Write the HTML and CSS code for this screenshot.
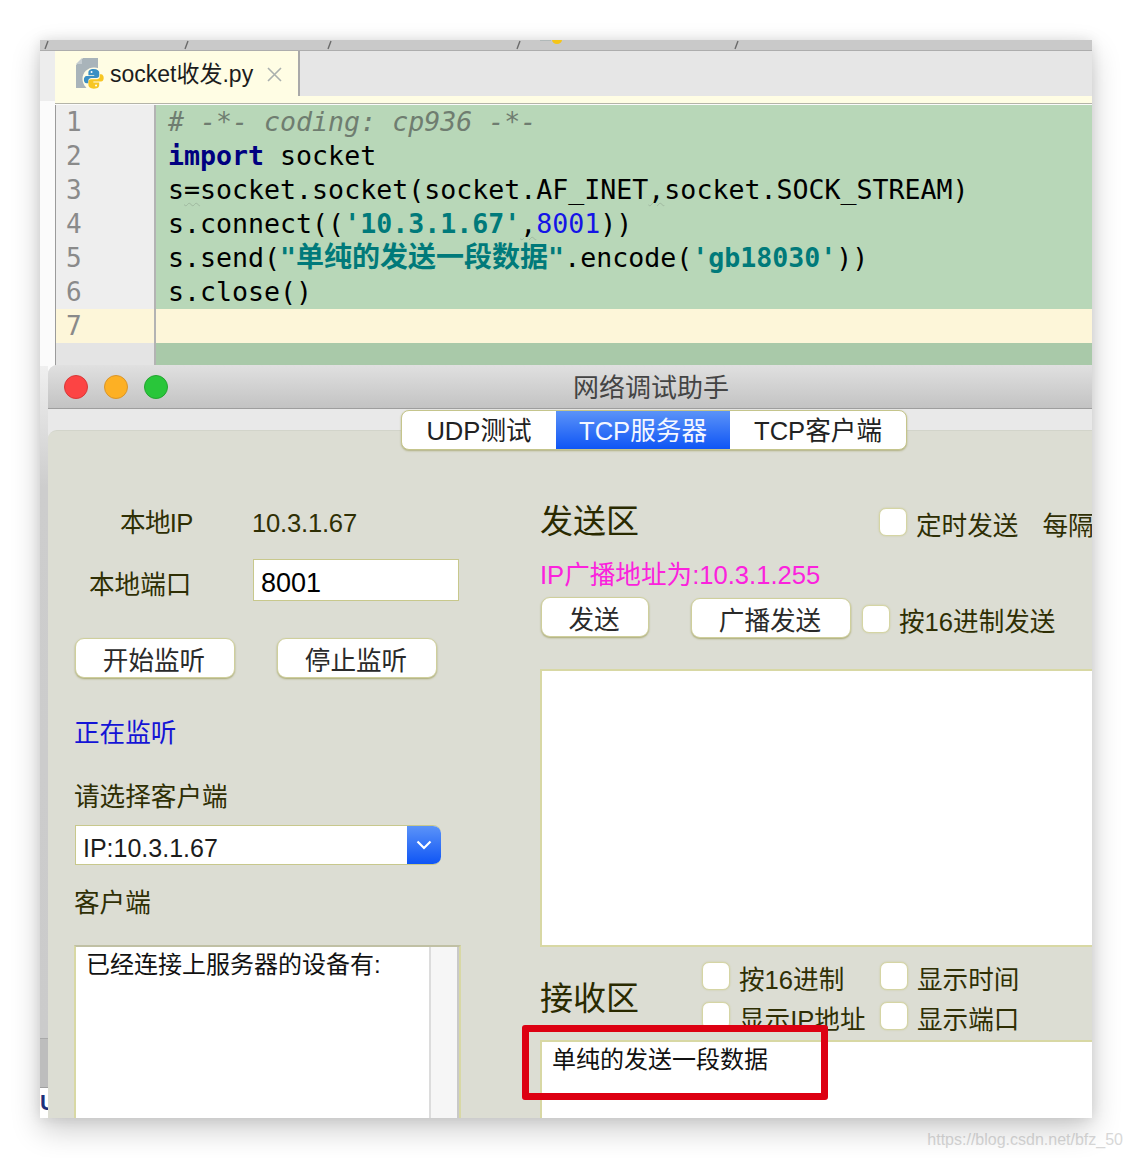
FILE: index.html
```html
<!DOCTYPE html>
<html lang="zh">
<head>
<meta charset="utf-8">
<title>socket收发</title>
<link rel="stylesheet" href="styles.css">
</head>
<body>
<main class="shot">
  <svg class="strip" width="1052" height="11" viewBox="0 0 1052 10">
    <g stroke="#6a6a6a" stroke-width="1.4" fill="none">
      <path d="M5 9 L8 1"/><path d="M145 9 L148 1"/><path d="M288 9 L291 1"/><path d="M477 9 L480 1"/><path d="M695 9 L698 1"/>
    </g>
    <path d="M500 0 H511" stroke="#9aa" stroke-width="1"/>
    <path d="M512 0 H522 A5 4 0 0 1 512 0 Z" fill="#f5c518"/>
  </svg>
  <header class="head">
    <div class="head-side"></div>
    <div class="head-main">
      <div class="tabs">
        <div class="tab">
          <svg class="pyicon" width="30" height="32" viewBox="0 0 30 32">
            <path d="M7 0 H22 V30 H0 V7 Z" fill="#a9b4ba"/>
            <path d="M6 0 V6 H0 Z" fill="#c4ccd0"/>
            <circle cx="18" cy="21" r="11.5" fill="#fffde6"/>
            <g transform="translate(7 10) scale(0.9)">
              <path d="M12 1 C7 1 6 3 6 5 V8 H12.5 V9 H4 C2 9 1 11 1 13 C1 15 2 17 4 17 H6 V14 C6 12 7.5 11 9.5 11 H15 C17 11 18 10 18 8 V5 C18 3 16 1 12 1 Z" fill="#3a8fc4"/>
              <path d="M12 23 C17 23 18 21 18 19 V16 H11.5 V15 H20 C22 15 23 13 23 11 C23 9 22 7 20 7 H18.6 V10 C18.6 12 16.5 12.6 14.5 12.6 H9 C7 12.6 6 14 6 16 V19 C6 21 8 23 12 23 Z" fill="#f7c624"/>
              <circle cx="9.5" cy="4.5" r="1.1" fill="#fff"/>
              <circle cx="14.5" cy="19.5" r="1.1" fill="#fff"/>
            </g>
          </svg>
          <span class="tab-name">socket收发.py</span>
          <svg class="tab-close" width="15" height="15" viewBox="0 0 15 15">
            <path d="M1 1 L14 14 M14 1 L1 14" stroke="#aab0ae" stroke-width="1.6" fill="none"/>
          </svg>
        </div>
      </div>
      <div class="tab-band"></div>
    </div>
  </header>
  <section class="editor">
    <div class="row"><span class="ln">1</span><code class="code cm"># -*- coding: cp936 -*-</code></div>
    <div class="row"><span class="ln">2</span><code class="code"><b class="kw">import</b> socket</code></div>
    <div class="row"><span class="ln">3</span><code class="code">s<span class="warn">=</span>socket.socket(socket.AF_INET<span class="warn">,</span>socket.SOCK_STREAM)</code></div>
    <div class="row"><span class="ln">4</span><code class="code">s.connect((<b class="str">'10.3.1.67'</b><span class="warn">,</span><span class="num">8001</span>))</code></div>
    <div class="row"><span class="ln">5</span><code class="code">s.send(<b class="str">"<span class="cjk">单纯的发送一段数据</span>"</b>.encode(<b class="str">'gb18030'</b>))</code></div>
    <div class="row"><span class="ln">6</span><code class="code">s.close()</code></div>
    <div class="row row-cur"><span class="ln">7</span><code class="code"></code></div>
    <div class="row row-fill"><span class="ln"></span><code class="code"></code></div>
  </section>
  <div class="under">
    <div class="under-a"></div>
    <div class="under-b"></div>
    <div class="under-c">U</div>
  </div>

  <section class="win">
    <div class="titlebar">
      <span class="light red"></span><span class="light amber"></span><span class="light green"></span>
      <span class="title">网络调试助手</span>
    </div>
    <div class="win-body">
      <nav class="segs">
        <span class="seg seg-a">UDP测试</span>
        <span class="seg seg-b on">TCP服务器</span>
        <span class="seg seg-c">TCP客户端</span>
      </nav>
      <div class="panel">
        <div class="col-l">
          <div class="pair pair-ip"><span class="lab lab-ip">本地IP</span><span class="lab lab-addr">10.3.1.67</span></div>
          <div class="pair pair-port"><span class="lab lab-port">本地端口</span><div class="field">8001</div></div>
          <div class="btns"><span class="btn btn-wide">开始监听</span><span class="btn btn-wide">停止监听</span></div>
          <div class="lab listening">正在监听</div>
          <div class="lab choose">请选择客户端</div>
          <div class="select"><span class="select-val">IP:10.3.1.67</span>
            <span class="select-arrow"><svg width="16" height="10" viewBox="0 0 16 10"><path d="M1.5 1.5 L8 8 L14.5 1.5" stroke="#fff" stroke-width="2.2" fill="none"/></svg></span>
          </div>
          <div class="lab clients">客户端</div>
          <div class="list"><div class="list-text">已经连接上服务器的设备有:</div><div class="list-bar"></div></div>
        </div>
        <div class="col-r">
          <div class="send-head">
            <h2 class="area">发送区</h2>
            <span class="check"></span><span class="lab cklab">定时发送</span><span class="lab cklab every">每隔</span>
          </div>
          <div class="lab bcast">IP广播地址为:10.3.1.255</div>
          <div class="send-btns">
            <span class="btn btn-send">发送</span>
            <span class="btn btn-wide btn-cast">广播发送</span>
            <span class="check check-hex"></span><span class="lab cklab hexlab">按16进制发送</span>
          </div>
          <div class="box box-send"></div>
          <div class="recv-head">
            <h2 class="area area-recv">接收区</h2>
            <div class="opts">
              <div class="opt"><span class="check"></span><span class="lab cklab">按16进制</span></div>
              <div class="opt"><span class="check"></span><span class="lab cklab">显示时间</span></div>
              <div class="opt"><span class="check"></span><span class="lab cklab">显示IP地址</span></div>
              <div class="opt"><span class="check"></span><span class="lab cklab">显示端口</span></div>
            </div>
          </div>
          <div class="box box-recv">单纯的发送一段数据</div>
        </div>
      </div>
    </div>
  </section>
  <div class="mark"></div>
</main>
<footer class="wm">https://blog.csdn.net/bfz_50</footer>
</body>
</html>
```
FILE: styles.css
```css
* { box-sizing: border-box; }
html, body { margin: 0; padding: 0; height: 1158px; overflow: hidden; background: #fff; }
body {
  padding: 40px 40px 0;
  font-family: "Liberation Sans", "Noto Sans CJK SC", sans-serif;
}
.shot {
  position: relative;
  width: 1052px;
  height: 1078px;
  overflow: visible;
  background: #fbfbfb;
  box-shadow: 0 12px 28px rgba(0,0,0,.2), 0 0 12px rgba(0,0,0,.1);
  display: flex;
  flex-direction: column;
}
.strip { display: block; height: 11px; flex: none; background: #c9c9c9; border-bottom: 1px solid #adadad; }
.head { display: flex; height: 54px; flex: none; }
.head-side { width: 15px; height: 50px; background: #ededed; flex: none; }
.head-main { flex: 1; display: flex; flex-direction: column; }
.tabs { height: 46px; background: #e6e6e6; border-bottom: 1px solid #b5b5a5; display: flex; }
.tab {
  width: 245px;
  height: 46px;
  background: #fffde4;
  border-right: 2px solid #a9a9a9;
  display: flex;
  align-items: center;
  padding-left: 21px;
  color: #1c1c1c;
}
.pyicon { flex: none; margin-right: 4px; }
.tab-name { font-size: 23px; line-height: 46px; white-space: nowrap; }
.tab-close { margin-left: 14px; flex: none; }
.tab-band { height: 8px; background: #fffde4; border-bottom: 1px solid #b4b4a8; margin-top: -1px; }

.editor {
  margin-left: 15px;
  border-left: 1px solid #9b9b9b;
  height: 261px;
  flex: none;
  display: flex;
  flex-direction: column;
}
.row { display: flex; height: 34px; flex: none; }
.ln {
  width: 100px;
  flex: none;
  background: #eeeeee;
  border-right: 2px solid #b3b3b3;
  padding-left: 10px;
  font: 26px/34px "DejaVu Sans Mono", monospace;
  color: #8a8a8a;
}
.code {
  flex: 1;
  background: #b8d7b8;
  padding-left: 12px;
  font: 26.6px/34px "DejaVu Sans Mono", "Noto Sans CJK SC", monospace;
  color: #000;
  white-space: pre;
  overflow: hidden;
}
.row-cur .ln { background: #fdf6d9; }
.row-cur .code { background: #fdf6d9; }
.row-fill { height: 22px; }
.row-fill .ln { background: #e4e4e4; }
.row-fill .code { background: #a9c9a9; }
.cm { color: #6f7d70; font-style: italic; }
.kw { color: #000080; font-weight: 700; }
.str { color: #007a7a; font-weight: 700; }
.num { color: #1414e6; }
.cjk { font-family: "Noto Sans CJK SC", sans-serif; font-size: 28px; font-weight: 700; line-height: 0; }
.warn { text-decoration: underline wavy #9fb89f 1px; text-underline-offset: 3px; }

.under { width: 8px; flex: 1; display: flex; flex-direction: column; overflow: hidden; }
.under-a { height: 672px; background: linear-gradient(#efefef, #cdcdcd 18%, #cbcbcb); flex: none; }
.under-b { height: 50px; background: #bdbdbd; border-top: 1px solid #a9a9a9; border-bottom: 1px solid #a0a0a0; flex: none; }
.under-c { flex: 1; background: #fff; color: #1c2f7a; font: 700 22px/30px "Liberation Sans", sans-serif; }

.win {
  position: absolute;
  left: 8px;
  right: 0;
  top: 325px;
  bottom: 0;
  overflow: hidden;
  border-radius: 9px 0 0 0;
  display: flex;
  flex-direction: column;
  background: #e9e9e9;
}
.titlebar {
  height: 44px;
  flex: none;
  background: linear-gradient(#e0e0e0, #c3c3c3);
  border-bottom: 1px solid #9e9e9e;
  display: flex;
  align-items: center;
  padding-left: 16px;
  gap: 16px;
}
.light { width: 24px; height: 24px; border-radius: 50%; flex: none; }
.red { background: #fc4444; border: 1px solid #d83838; }
.amber { background: #fdb024; border: 1px solid #d9952a; }
.green { background: #29c63a; border: 1px solid #23a530; }
.title { margin-left: 389px; padding-top: 2px; font-size: 26px; color: #444; line-height: 42px; white-space: nowrap; }
.win-body { flex: 1; display: flex; flex-direction: column; min-height: 0; }
.segs {
  position: relative;
  z-index: 1;
  flex: none;
  display: flex;
  width: 506px;
  height: 40px;
  margin: 1px 0 -20px 353px;
  background: #fff;
  border: 1px solid #c5c58c;
  border-radius: 8px;
  box-shadow: 0 1px 2px #b0b080;
  overflow: hidden;
  font-size: 25.6px;
  color: #222;
}
.seg { display: flex; align-items: center; justify-content: center; white-space: nowrap; padding-bottom: 3px; }
.seg-a { width: 154px; }
.seg-b { width: 174px; }
.seg-c { flex: 1; }
.on { background: linear-gradient(#5b93f8, #0f55f5); color: #f4f7ff; }

.panel {
  flex: 1;
  min-height: 0;
  background: #dcddd3;
  border-top: 1px solid #d2d4ca;
  border-radius: 9px 0 0 0;
  display: grid;
  grid-template-columns: 492px 1fr;
  overflow: hidden;
}
.lab { font-size: 25.6px; line-height: 40px; color: #2f2f04; white-space: nowrap; }
.col-l { padding: 72px 0 0 27px; display: flex; flex-direction: column; min-width: 0; }
.pair { display: grid; grid-template-columns: 177px 1fr; }
.pair-ip { height: 40px; }
.pair-port { margin-top: 16px; height: 42px; }
.lab-ip { padding-left: 45px; letter-spacing: -.7px; }
.lab-addr { letter-spacing: -.2px; }
.lab-port { padding: 6px 0 0 14px; }
.field {
  width: 206px;
  height: 42px;
  margin-left: 1px;
  background: #fff;
  border: 1px solid #c8c88c;
  padding-left: 7px;
  font-size: 27px;
  line-height: 46px;
  color: #000;
}
.btns { display: flex; gap: 42px; margin-top: 37px; }
.btn {
  display: block;
  height: 40px;
  background: #fff;
  border: 1px solid #cfcf9c;
  border-radius: 9px;
  box-shadow: 0 1px 2px #a8a870;
  font-size: 25.6px;
  line-height: 45px;
  text-align: center;
  padding-right: 2px;
  color: #2a2a2a;
  white-space: nowrap;
  overflow: hidden;
}
.btn-wide { width: 160px; }
.listening { margin: 35px 0 0 -1px; color: #1414d6; }
.choose { margin: 24px 0 0 -1px; }
.select {
  margin-top: 8px;
  width: 366px;
  height: 40px;
  flex: none;
  display: flex;
  background: #fff;
  border: 1px solid #c8c88c;
  border-right: 0;
  border-radius: 0 8px 8px 0;
  overflow: hidden;
}
.select-val { flex: 1; padding-left: 7px; font-size: 25px; line-height: 44px; color: #1c1c1c; }
.select-arrow {
  width: 34px;
  background: linear-gradient(#5b93f8, #0f55f5);
  display: flex;
  align-items: center;
  justify-content: center;
}
.clients { margin: 18px 0 0 -1px; }
.list {
  margin: 22px 0 0 -1px;
  width: 387px;
  height: 190px;
  flex: none;
  display: flex;
  background: #fff;
  border: 2px solid #d8d8a4;
  border-top-color: #c0c0a4;
}
.list-text { flex: 1; padding: 2px 0 0 10px; font-size: 24px; line-height: 32px; color: #111; white-space: nowrap; }
.list-bar { width: 30px; flex: none; background: #f6f6f6; border-left: 2px solid #dcdcdc; border-right: 2px solid #c9c9c9; }

.col-r { padding-top: 71px; display: flex; flex-direction: column; min-width: 0; }
.send-head { display: flex; align-items: flex-start; height: 40px; white-space: nowrap; }
.area { margin: 0; font-size: 33px; font-weight: 400; line-height: 40px; color: #2a2a00; flex: none; }
.send-head .area { width: 339px; }
.check {
  display: block;
  width: 28px;
  height: 28px;
  flex: none;
  background: #fff;
  border: 1px solid #d5d5a4;
  border-radius: 7px;
  box-shadow: 0 0 2px #c8c89a;
}
.send-head .check { margin-top: 6px; }
.cklab { margin-left: 9px; line-height: 36px; flex: none; }
.send-head .cklab { margin-top: 6px; }
.every { margin-left: 24px; }
.bcast { margin-top: 13px; color: #fb22dd; }
.send-btns { display: flex; align-items: flex-start; margin-top: 2px; height: 41px; }
.btn-send { width: 108px; margin-left: 1px; }
.btn-cast { margin: 1px 0 0 42px; }
.check-hex { margin: 8px 0 0 11px; }
.hexlab { margin-top: 7px; }
.box { background: #fff; border: 2px solid #d8d8a4; flex: none; }
.box-send { margin-top: 31px; height: 278px; border-right: 0; }
.recv-head { display: grid; grid-template-columns: 162px 1fr; margin-top: 15px; height: 68px; }
.area-recv { margin-top: 17px; }
.opts { display: grid; grid-template-columns: 178px 1fr; row-gap: 12px; grid-auto-rows: 28px; }
.opt { display: flex; height: 28px; }
.opt .cklab { margin-top: 0; }
.box-recv {
  margin-top: 10px;
  height: 100px;
  border-right: 0;
  border-bottom: 0;
  padding: 0 0 0 10px;
  font-size: 24px;
  line-height: 36px;
  color: #111;
}

.mark {
  position: absolute;
  left: 482px;
  top: 985px;
  width: 306px;
  height: 75px;
  border: 7px solid #dd0012;
  border-radius: 3px;
  z-index: 2;
}
.wm {
  margin: 10px -31px 0 0;
  text-align: right;
  font-size: 16px;
  line-height: 24px;
  color: #d8d8d8;
}
```
